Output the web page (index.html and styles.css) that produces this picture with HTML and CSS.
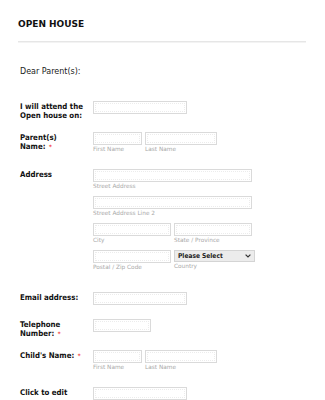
FILE: index.html
```html
<!DOCTYPE html>
<html>
<head>
<meta charset="utf-8">
<link rel="stylesheet" href="styles.css">
</head>
<body>
<div class="page">
  <div class="header">
    <h1 class="title">OPEN HOUSE</h1>
  </div>
  <div class="divider"></div>
  <p class="intro">Dear Parent(s):</p>

  <div class="row row-date">
    <div class="label">I will attend the<br>Open house on:</div>
    <div class="field"><div class="input w-md"></div></div>
  </div>

  <div class="row row-name">
    <div class="label">Parent(s)<br>Name: <span class="req">*</span></div>
    <div class="field">
      <div class="pair">
        <div class="group"><div class="input w-first"></div><div class="sub">First Name</div></div>
        <div class="group"><div class="input w-last"></div><div class="sub">Last Name</div></div>
      </div>
    </div>
  </div>

  <div class="row row-address">
    <div class="label">Address</div>
    <div class="field">
      <div class="group gap"><div class="input w-full"></div><div class="sub">Street Address</div></div>
      <div class="group gap"><div class="input w-full"></div><div class="sub">Street Address Line 2</div></div>
      <div class="pair gap">
        <div class="group"><div class="input w-half"></div><div class="sub">City</div></div>
        <div class="group"><div class="input w-half"></div><div class="sub">State / Province</div></div>
      </div>
      <div class="pair">
        <div class="group"><div class="input w-half"></div><div class="sub">Postal / Zip Code</div></div>
        <div class="group">
          <div class="select"><span>Please Select</span>
            <svg class="chev" width="6" height="4" viewBox="0 0 6 4"><path d="M0.6 0.6 L3 3 L5.4 0.6" fill="none" stroke="#333" stroke-width="1.2"/></svg>
          </div>
          <div class="sub">Country</div>
        </div>
      </div>
    </div>
  </div>

  <div class="row row-email">
    <div class="label">Email address:</div>
    <div class="field"><div class="input w-md"></div></div>
  </div>

  <div class="row row-tel">
    <div class="label">Telephone<br>Number: <span class="req">*</span></div>
    <div class="field"><div class="input w-sm"></div></div>
  </div>

  <div class="row row-child">
    <div class="label">Child's Name: <span class="req">*</span></div>
    <div class="field">
      <div class="pair">
        <div class="group"><div class="input w-first"></div><div class="sub">First Name</div></div>
        <div class="group"><div class="input w-last"></div><div class="sub">Last Name</div></div>
      </div>
    </div>
  </div>

  <div class="row row-edit">
    <div class="label">Click to edit</div>
    <div class="field"><div class="input w-md"></div></div>
  </div>
</div>
</body>
</html>
```
FILE: styles.css
```css
html, body {
  margin: 0;
  padding: 0;
  background: #fff;
  overflow: hidden;
}
body {
  font-family: "DejaVu Sans", Verdana, sans-serif;
  color: #111;
}
.page {
  padding: 0 19px 0 18px;
}
.header {
  padding-top: 18px;
}
.title {
  margin: 0;
  font-size: 9px;
  line-height: 12px;
  font-weight: bold;
  color: #111;
}
.divider {
  margin-top: 11px;
  height: 1px;
  background: #e6e6e6;
  box-shadow: 0 1px 0 #f3f3f3;
}
.intro {
  margin: 25px 0 0 2px;
  font-size: 8px;
  line-height: 10px;
  color: #222;
}
.row {
  display: flex;
  padding-left: 2px;
}
.row-date { margin-top: 24px; min-height: 31px; }
.row-name { min-height: 37px; }
.row-address { min-height: 123px; }
.row-email { min-height: 27px; }
.row-tel { min-height: 31px; }
.row-child { min-height: 37px; }
.row-edit { min-height: 20px; }

.label {
  flex: none;
  width: 73px;
  padding-top: 1px;
  font-family: "DejaVu Sans Condensed", "DejaVu Sans", sans-serif;
  font-size: 7.8px;
  line-height: 9px;
  font-weight: bold;
  color: #111;
}
.req {
  color: #f23b3b;
  font-size: 6px;
  margin-left: 1px;
}
.field {
  display: flex;
  flex-direction: column;
}
.pair {
  display: flex;
  gap: 3px;
}
.group.gap, .pair.gap {
  margin-bottom: 6px;
}
.input {
  box-sizing: border-box;
  height: 13px;
  border: 1px solid #dadada;
  background: #fff;
  outline: 1px dotted #ececec;
  outline-offset: -3px;
}
.w-md { width: 94px; }
.w-sm { width: 58px; }
.w-first { width: 49px; }
.w-last { width: 72px; }
.w-full { width: 159px; }
.w-half { width: 78px; }

.sub {
  font-size: 5.8px;
  line-height: 8px;
  color: #a9a9a9;
}
.select {
  box-sizing: border-box;
  width: 81px;
  height: 12px;
  border: 1px solid #d4d4d4;
  background-color: #ececec;
  background-image: radial-gradient(#e0e0e0 0.5px, transparent 0.6px);
  background-size: 2px 2px;
  display: flex;
  align-items: center;
  justify-content: space-between;
  padding: 0 3px 0 3px;
  font-family: "DejaVu Sans Condensed", "DejaVu Sans", sans-serif;
  font-size: 6.6px;
  font-weight: bold;
  color: #222;
}
.chev {
  display: block;
  flex: none;
}
```
